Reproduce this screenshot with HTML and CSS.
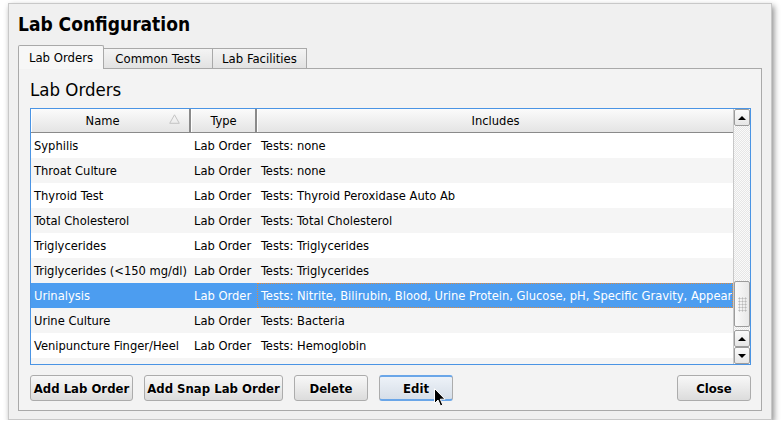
FILE: index.html
```html
<!DOCTYPE html>
<html lang="en">
<head>
  <meta charset="UTF-8">
  <title>Lab Configuration</title>
  <link rel="stylesheet" href="styles.css">
</head>
<body>

  <!-- Dialog window -->
  <div class="window">
    <h1 class="title">Lab Configuration</h1>

    <!-- Tabs -->
    <div class="tabs">
      <div class="tab active">Lab Orders</div>
      <div class="tab">Common Tests</div>
      <div class="tab">Lab Facilities</div>
    </div>

    <div class="pane">
      <h2 class="heading">Lab Orders</h2>

      <!-- Table with scrollbar -->
      <div class="table">
        <div class="table-main">
          <div class="row header">
            <div class="cell name">Name
              <svg class="sort" width="11" height="10" viewBox="0 0 11 10">
                <path d="M5.5 0.8 L10.3 9.3 L0.7 9.3 Z" fill="none" stroke="#c4c4c4" stroke-width="1"/>
              </svg>
            </div>
            <div class="cell type">Type</div>
            <div class="cell includes">Includes</div>
          </div>
          <div class="rows">
            <div class="row"><div class="cell name">Syphilis</div><div class="cell type">Lab Order</div><div class="cell includes">Tests: none</div></div>
            <div class="row alt"><div class="cell name">Throat Culture</div><div class="cell type">Lab Order</div><div class="cell includes">Tests: none</div></div>
            <div class="row"><div class="cell name">Thyroid Test</div><div class="cell type">Lab Order</div><div class="cell includes">Tests: Thyroid Peroxidase Auto Ab</div></div>
            <div class="row alt"><div class="cell name">Total Cholesterol</div><div class="cell type">Lab Order</div><div class="cell includes">Tests: Total Cholesterol</div></div>
            <div class="row"><div class="cell name">Triglycerides</div><div class="cell type">Lab Order</div><div class="cell includes">Tests: Triglycerides</div></div>
            <div class="row alt"><div class="cell name">Triglycerides (&lt;150 mg/dl)</div><div class="cell type">Lab Order</div><div class="cell includes">Tests: Triglycerides</div></div>
            <div class="row selected"><div class="cell name">Urinalysis</div><div class="cell type">Lab Order</div><div class="cell includes focus">Tests: Nitrite, Bilirubin, Blood, Urine Protein, Glucose, pH, Specific Gravity, Appear</div></div>
            <div class="row alt"><div class="cell name">Urine Culture</div><div class="cell type">Lab Order</div><div class="cell includes">Tests: Bacteria</div></div>
            <div class="row"><div class="cell name">Venipuncture Finger/Heel</div><div class="cell type">Lab Order</div><div class="cell includes">Tests: Hemoglobin</div></div>
            <div class="row alt"><div class="cell name"></div><div class="cell type"></div><div class="cell includes"></div></div>
          </div>
        </div>

        <div class="scrollbar">
          <div class="sb-btn"><span class="arrow up"></span></div>
          <div class="sb-track">
            <div class="sb-thumb"><span class="grip"></span></div>
          </div>
          <div class="sb-btn"><span class="arrow up"></span></div>
          <div class="sb-btn"><span class="arrow down"></span></div>
        </div>
      </div>

      <!-- Buttons -->
      <div class="buttons">
        <button class="btn add">Add Lab Order</button>
        <button class="btn snap">Add Snap Lab Order</button>
        <button class="btn small">Delete</button>
        <button class="btn small hover">Edit
          <svg class="cursor" width="12" height="19" viewBox="0 0 12 19">
            <path d="M0.5 0.5 L0.5 15.5 L4 12 L6.5 18 L8.8 17 L6.3 11.2 L11 11.2 Z" fill="#000" stroke="#fff" stroke-width="1"/>
          </svg>
        </button>
        <button class="btn small close">Close</button>
      </div>
    </div>
  </div>

</body>
</html>
```

FILE: styles.css
```css
/* General styles */
body {
  background-color: #ffffff;
  font-family: 'DejaVu Sans Condensed', 'DejaVu Sans', sans-serif;
  font-size: 13px;
  color: #000000;
  margin: 0;
}

.window {
  width: 764px;
  height: 417px;
  margin: 3px 0 0 8px;
  background-color: #f0f0f0;
  border: 1px solid #c8c8c8;
  box-shadow: 2px 3px 6px rgba(0, 0, 0, 0.45);
  padding: 0 9px 0 9px;
  box-sizing: border-box;
}

.title {
  font-size: 19px;
  font-weight: bold;
  margin: 0;
  padding-top: 9px;
  height: 32px;
  box-sizing: border-box;
  line-height: 22px;
}

/* Tabs */
.tabs {
  display: flex;
  align-items: flex-end;
  height: 23px;
  margin-top: 9px;
  position: relative;
  z-index: 1;
}

.tab {
  height: 20px;
  line-height: 19px;
  padding: 0 11px;
  border: 1px solid #a9a9a9;
  border-bottom: none;
  border-left: none;
  background: linear-gradient(#f4f4f4, #e2e2e2);
  box-sizing: border-box;
}

.tab.active {
  width: 86px;
  height: 24px;
  line-height: 23px;
  border-left: 1px solid #a9a9a9;
  border-radius: 2px 2px 0 0;
  background: #f7f7f7;
  margin-bottom: -1px;
  text-align: center;
  padding: 0;
}

.tab:nth-child(2) {
  width: 109px;
  text-align: center;
  padding: 0;
}

.tab:nth-child(3) {
  width: 94px;
  text-align: center;
  padding: 0;
}

.pane {
  height: 343px;
  border: 1px solid #a9a9a9;
  background-color: #f3f3f3;
  padding: 0 10px 0 11px;
  box-sizing: border-box;
}

.heading {
  font-size: 18.5px;
  font-weight: normal;
  margin: 0;
  height: 39px;
  padding-top: 10px;
  line-height: 22px;
  box-sizing: border-box;
}

/* Table */
.table {
  display: flex;
  height: 257px;
  border: 1px solid #4a94e4;
  background-color: #ffffff;
  box-sizing: border-box;
  font-size: 12.8px;
}

.table-main {
  width: 703px;
  overflow: hidden;
}

.row {
  display: flex;
  height: 25px;
  line-height: 26px;
  white-space: nowrap;
}

.row.alt {
  background-color: #f5f5f5;
}

.row.selected {
  background-color: #4c9df0;
  color: #ffffff;
}

.cell {
  overflow: hidden;
  box-sizing: border-box;
}

.cell.name {
  width: 160px;
  padding-left: 3px;
}

.cell.type {
  width: 66px;
  padding-left: 3px;
}

.cell.includes {
  flex: 1;
  padding-left: 4px;
}

.cell.focus {
  border: 1px dotted #e08a3c;
  line-height: 24px;
  padding-left: 3px;
}

.row.header {
  height: 24px;
  line-height: 24px;
  background: linear-gradient(#fbfbfb, #e4e4e4);
  border-bottom: 1px solid #8a8a8a;
  box-sizing: border-box;
}

.row.header .cell {
  text-align: center;
  border-right: 2px solid #8a8a8a;
  border-left: 1px solid #ffffff;
  padding-left: 0;
  position: relative;
}

.row.header .cell.name {
  padding-right: 16px;
}

.row.header .cell.includes {
  border-right: none;
}

.sort {
  position: absolute;
  right: 9px;
  top: 5px;
}

/* Scrollbar */
.scrollbar {
  width: 17px;
  display: flex;
  flex-direction: column;
  border-left: 1px solid #c8c8c8;
  box-sizing: border-box;
}

.sb-btn {
  height: 17px;
  border: 1px solid #9c9c9c;
  border-radius: 2px;
  background: linear-gradient(#fbfbfb, #e6e6e6);
  display: flex;
  align-items: center;
  justify-content: center;
  box-sizing: border-box;
}

.sb-track {
  flex: 1;
  background-color: #f7f7f7;
  background-image: repeating-conic-gradient(#e6e6e6 0 25%, #fafafa 0 50%);
  background-size: 2px 2px;
  display: flex;
  flex-direction: column;
  justify-content: flex-end;
  padding-bottom: 3px;
}

.sb-thumb {
  height: 46px;
  border: 1px solid #9c9c9c;
  border-radius: 2px;
  background: linear-gradient(to right, #fafafa, #e8e8e8);
  display: flex;
  align-items: center;
  justify-content: center;
  box-sizing: border-box;
}

.grip {
  width: 9px;
  height: 15px;
  background-image: radial-gradient(#b8b8b8 45%, transparent 50%);
  background-size: 3px 3px;
}

.arrow {
  width: 0;
  height: 0;
  border-left: 4px solid transparent;
  border-right: 4px solid transparent;
}

.arrow.up {
  border-bottom: 4px solid #000000;
}

.arrow.down {
  border-top: 4px solid #000000;
}

/* Buttons */
.buttons {
  display: flex;
  gap: 11px;
  margin-top: 10px;
}

.btn {
  height: 26px;
  padding: 0;
  font-family: 'DejaVu Sans Condensed', 'DejaVu Sans', sans-serif;
  font-size: 13px;
  font-weight: bold;
  color: #000000;
  background: linear-gradient(#f8f8f8, #dcdcdc);
  border: 1px solid #acacac;
  border-radius: 3px;
  text-shadow: 0 0 2px #ffffff;
  position: relative;
}

.btn.add {
  width: 103px;
}

.btn.snap {
  width: 139px;
}

.btn.small {
  width: 74px;
}

.btn.hover {
  background: linear-gradient(#edf2f8, #d6dee8);
  border-top: 2px solid #6aa6e8;
  border-bottom: 2px solid #6aa6e8;
}

.btn.close {
  margin-left: auto;
}

.cursor {
  position: absolute;
  left: 54px;
  top: 11px;
}
```
